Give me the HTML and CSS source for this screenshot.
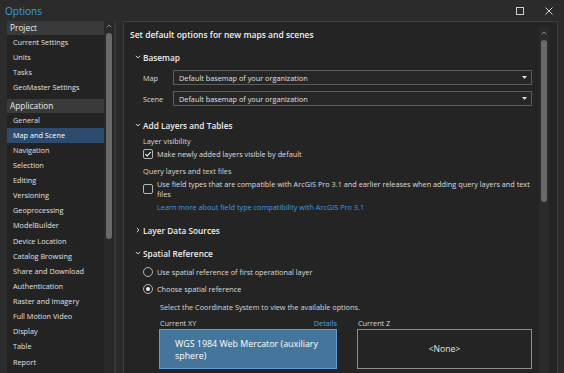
FILE: index.html
```html
<!DOCTYPE html>
<html>
<head>
<meta charset="utf-8">
<link rel="stylesheet" href="styles.css">
</head>
<body>
<div class="window">
  <div class="titlebar">
    <span class="title">Options</span>
    <div class="controls">
      <span class="maxbtn"></span>
      <svg class="closebtn" width="8" height="8" viewBox="0 0 8 8"><path d="M0.5 0.5 L7.5 7.5 M7.5 0.5 L0.5 7.5" stroke="#d0d0d0" stroke-width="1" fill="none"/></svg>
    </div>
  </div>
  <div class="main">
    <div class="nav">
      <div class="navlist">
        <div class="group">
          <div class="ghead">Project</div>
          <div class="item">Current Settings</div>
          <div class="item">Units</div>
          <div class="item">Tasks</div>
          <div class="item">GeoMaster Settings</div>
        </div>
        <div class="group">
          <div class="ghead">Application</div>
          <div class="item">General</div>
          <div class="item sel">Map and Scene</div>
          <div class="item">Navigation</div>
          <div class="item">Selection</div>
          <div class="item">Editing</div>
          <div class="item">Versioning</div>
          <div class="item">Geoprocessing</div>
          <div class="item">ModelBuilder</div>
          <div class="item">Device Location</div>
          <div class="item">Catalog Browsing</div>
          <div class="item">Share and Download</div>
          <div class="item">Authentication</div>
          <div class="item">Raster and Imagery</div>
          <div class="item">Full Motion Video</div>
          <div class="item">Display</div>
          <div class="item">Table</div>
          <div class="item">Report</div>
        </div>
      </div>
      <div class="vscroll nscroll">
        <svg class="uparrow" width="6" height="4" viewBox="0 0 6 4"><path d="M0.8 3.2 L3 1 L5.2 3.2" stroke="#8a8a8a" stroke-width="1" fill="none"/></svg>
        <div class="thumb nthumb"></div>
      </div>
    </div>
    <div class="panel">
      <div class="content">
        <div class="page-title">Set default options for new maps and scenes</div>

        <div class="sec mt2"><svg class="chev" width="6" height="4" viewBox="0 0 6 4"><path d="M0.8 0.8 L3 3 L5.2 0.8" stroke="#cfcfcf" stroke-width="1" fill="none"/></svg>Basemap</div>
        <div class="field"><span class="flabel">Map</span><div class="select"><span>Default basemap of your organization</span><svg width="5" height="3" viewBox="0 0 5 3"><path d="M0 0 H5 L2.5 3 Z" fill="#dcdcdc"/></svg></div></div>
        <div class="field"><span class="flabel">Scene</span><div class="select"><span>Default basemap of your organization</span><svg width="5" height="3" viewBox="0 0 5 3"><path d="M0 0 H5 L2.5 3 Z" fill="#dcdcdc"/></svg></div></div>

        <div class="sec mt12"><svg class="chev" width="6" height="4" viewBox="0 0 6 4"><path d="M0.8 0.8 L3 3 L5.2 0.8" stroke="#cfcfcf" stroke-width="1" fill="none"/></svg>Add Layers and Tables</div>
        <div class="sub mt3">Layer visibility</div>
        <div class="check mt1"><span class="box"><svg width="8" height="8" viewBox="0 0 8 8"><path d="M1.4 4.2 L3.2 6 L6.8 2.2" stroke="#f0f0f0" stroke-width="1.1" fill="none"/></svg></span><span class="txt">Make newly added layers visible by default</span></div>
        <div class="sub mt5">Query layers and text files</div>
        <div class="check multi mt2"><span class="box"></span><span class="txt">Use field types that are compatible with ArcGIS Pro 3.1 and earlier releases when adding query layers and text files</span></div>
        <div class="link mt2">Learn more about field type compatibility with ArcGIS Pro 3.1</div>

        <div class="sec mt10"><svg class="chev" width="6" height="6" viewBox="0 0 6 6"><path d="M1.8 0.8 L4 3 L1.8 5.2" stroke="#cfcfcf" stroke-width="1" fill="none"/></svg>Layer Data Sources</div>

        <div class="sec mt9"><svg class="chev" width="6" height="4" viewBox="0 0 6 4"><path d="M0.8 0.8 L3 3 L5.2 0.8" stroke="#cfcfcf" stroke-width="1" fill="none"/></svg>Spatial Reference</div>
        <div class="radio mt5"><span class="rb"></span><span>Use spatial reference of first operational layer</span></div>
        <div class="radio mt3"><span class="rb on"></span><span>Choose spatial reference</span></div>
        <div class="indent mt5">Select the Coordinate System to view the available options.</div>
        <div class="csys">
          <div class="col-xy">
            <div class="col-head"><span>Current XY</span><span class="details">Details</span></div>
            <div class="xybox"><div class="xytext">WGS 1984 Web Mercator (auxiliary sphere)</div></div>
          </div>
          <div class="col-z">
            <div class="col-head"><span>Current Z</span></div>
            <div class="zbox">&lt;None&gt;</div>
          </div>
        </div>
      </div>
      <div class="vscroll pscroll">
        <svg class="uparrow" width="6" height="4" viewBox="0 0 6 4"><path d="M0.8 3.2 L3 1 L5.2 3.2" stroke="#8a8a8a" stroke-width="1" fill="none"/></svg>
        <div class="thumb pthumb"></div>
      </div>
    </div>
  </div>
</div>
</body>
</html>
```

FILE: styles.css
```css
* { box-sizing: border-box; margin: 0; padding: 0; }
html, body { width: 564px; height: 373px; overflow: hidden; }
body {
  background: #2b2b2b;
  font-family: "Open Sans", "Noto Sans", sans-serif;
  color: #dedede;
  font-size: 7.3px;
}
.window { display: flex; flex-direction: column; height: 373px; }

.titlebar { height: 21px; flex: none; display: flex; align-items: center; padding-left: 5px; }
.title { color: #3c9de3; font-size: 10px; flex: 1; }
.controls { display: flex; align-items: center; gap: 21px; padding-right: 11px; }
.maxbtn { width: 8px; height: 8px; border: 1px solid #cfcfcf; }
.closebtn { display: block; }

.main { display: flex; flex: 1; min-height: 0; padding-left: 7px; }

.nav { width: 109px; flex: none; display: flex; border-right: 2px solid #383838; }
.navlist { width: 97px; background: #232323; }
.group { margin-bottom: 3px; }
.ghead {
  height: 14px; line-height: 14px; background: #3a3a3a; color: #ececec;
  font-size: 8.3px; padding-left: 3px;
}
.item { height: 15.13px; line-height: 15px; padding-left: 6px; white-space: nowrap; color: #e0e0e0; }
.item.sel { background: #2c4b6e; color: #ffffff; }

.vscroll { width: 10px; flex: none; display: flex; flex-direction: column; align-items: center; }
.uparrow { display: block; }
.thumb { width: 6px; background: #6a6a6a; border-radius: 3px; }
.nscroll { background: #292929; padding-top: 3px; }
.nthumb { margin-top: 5px; height: 206px; }

.panel {
  margin-left: 7px; width: 435px; flex: none; border: 1px solid #3e3e3e; border-bottom: 0;
  background: #242424; display: flex;
}
.content { flex: 1; min-width: 0; }
.pscroll { margin: 5px 8px 0 0; background: #2b2b2b; padding-top: 4px; }
.pthumb { margin-top: 5px; height: 162px; }

.mt1 { margin-top: 1px; }
.mt2 { margin-top: 2px; }
.mt3 { margin-top: 3px; }
.mt5 { margin-top: 5px; }
.mt9 { margin-top: 9px; }
.mt10 { margin-top: 10px; }
.mt12 { margin-top: 12px; }

.page-title {
  height: 26px; line-height: 26px; padding-left: 6px; font-weight: 600;
  font-size: 8.5px; color: #f0f0f0; white-space: nowrap;
}
.sec {
  height: 14px; display: flex; align-items: center; padding-left: 11px; gap: 2px;
  font-weight: 600; font-size: 8.3px; color: #ececec; white-space: nowrap;
}
.chev { display: block; }

.field { display: flex; align-items: center; height: 15px; padding-left: 19px; margin-top: 6px; }
.flabel { width: 30px; color: #dadada; }
.select {
  width: 359px; height: 15px; border: 1px solid #5c5c5c; background: #262626;
  display: flex; align-items: center; justify-content: space-between;
  padding: 0 4px 0 5px; color: #e0e0e0;
}
.select svg { display: block; }

.sub { height: 12px; line-height: 12px; padding-left: 19px; color: #d8d8d8; }
.check { display: flex; align-items: center; gap: 4px; padding-left: 19px; height: 12px; }
.check.multi { height: auto; }
.check .txt { line-height: 12px; }
.check.multi .txt { line-height: 10px; }
.box {
  width: 10px; height: 10px; flex: none; border: 1px solid #b5b5b5; border-radius: 2px;
  display: flex; align-items: center; justify-content: center;
}
.box svg { display: block; }
.link { color: #3d9be6; padding-left: 33px; height: 12px; line-height: 12px; }

.radio { display: flex; align-items: center; gap: 4px; padding-left: 19px; height: 14px; }
.rb {
  width: 10px; height: 10px; flex: none; border-radius: 50%; border: 1px solid #b5b5b5;
  display: flex; align-items: center; justify-content: center;
}
.rb.on::after { content: ""; width: 4px; height: 4px; border-radius: 50%; background: #f0f0f0; }

.indent { padding-left: 36px; height: 12px; line-height: 12px; color: #d8d8d8; }

.csys { display: flex; gap: 20px; padding-left: 35px; margin-top: 4px; }
.col-xy { width: 178px; }
.col-z { width: 175px; }
.col-head { height: 12px; line-height: 12px; display: flex; justify-content: space-between; padding-left: 1px; color: #d8d8d8; }
.details { color: #4aa3e0; }
.xybox {
  height: 40px; border: 1px solid #5b9fd6; background: #44769b; color: #ffffff;
  font-size: 8.9px; line-height: 12px; padding: 8px 0 0 15px;
}
.xytext { max-width: 160px; }
.zbox {
  height: 40px; border: 1px solid #8d8d8d; display: flex; align-items: center; justify-content: center;
  font-size: 8.6px; color: #e6e6e6;
}
```
